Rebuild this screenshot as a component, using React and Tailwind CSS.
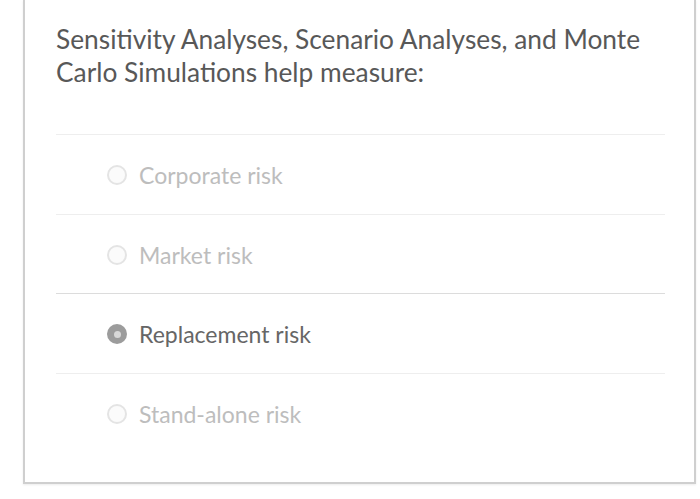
const options = [
  { label: "Corporate risk", selected: false },
  { label: "Market risk", selected: false },
  { label: "Replacement risk", selected: true },
  { label: "Stand-alone risk", selected: false },
];

function Radio({ selected }) {
  if (selected) {
    return (
      <span className="flex h-[20px] w-[20px] items-center justify-center rounded-full bg-[#9c9c9c]">
        <span className="h-[7px] w-[7px] rounded-full bg-[#d8d8d8]" />
      </span>
    );
  }
  return <span className="h-[20px] w-[20px] rounded-full border-2 border-[#e4e4e4] bg-[#fbfbfb]" />;
}

export default function App() {
  return (
    <div className="h-[499px] w-[700px] bg-white pl-[23px] pr-[4px] font-['Lato','Open_Sans',sans-serif]">
      <div className="h-[484px] border-2 border-t-0 border-[#cfcfcf] bg-white pl-[31px] pr-[29px] pt-[23px] shadow-[0_1px_2px_rgba(0,0,0,0.08)]">
        <p className="text-[26.3px] leading-[33px] text-[#585858]">
          Sensitivity Analyses, Scenario Analyses, and Monte Carlo Simulations help measure:
        </p>
        <div className="mt-[45px]">
          {options.map((o, i) => (
            <div
              key={o.label}
              className={`flex h-[79.5px] items-center gap-[12px] border-t pl-[51px] pt-[2px] ${
                i === 2 ? "border-[#dcdcdc]" : "border-[#eeeeee]"
              }`}
            >
              <Radio selected={o.selected} />
              <span
                className={`text-[23px] ${o.selected ? "text-[#666666]" : "text-[#bdbdbd]"}`}
              >
                {o.label}
              </span>
            </div>
          ))}
        </div>
      </div>
    </div>
  );
}
